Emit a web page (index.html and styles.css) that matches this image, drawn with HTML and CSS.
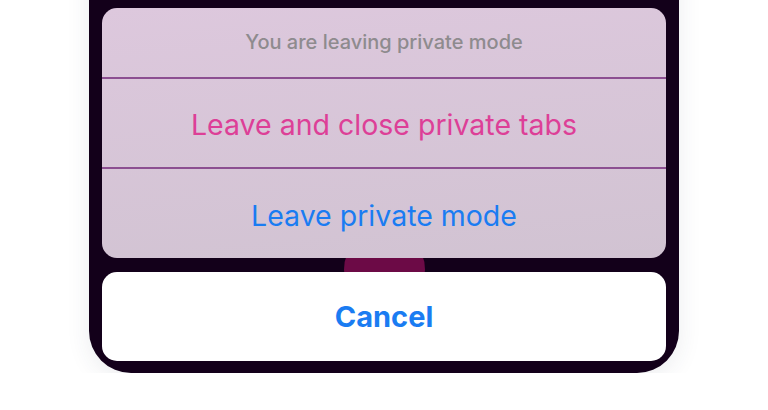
FILE: index.html
```html
<!DOCTYPE html>
<html lang="en">
<head>
    <meta charset="UTF-8">
    <meta name="viewport" content="width=device-width, initial-scale=1.0">
    <title>Leave private mode</title>
    <link rel="stylesheet" href="styles.css">
</head>
<body>
    <div class="phone">
        <div class="tab-button"></div>
        <div class="action-sheet">
            <div class="sheet-title">You are leaving private mode</div>
            <button class="sheet-action destructive">Leave and close private tabs</button>
            <button class="sheet-action">Leave private mode</button>
        </div>
        <button class="cancel-button">Cancel</button>
    </div>
</body>
</html>
```

FILE: styles.css
```css
body {
    margin: 0;
    padding: 0;
    background-color: #fff;
    font-family: 'Inter', 'Roboto', sans-serif;
    overflow: hidden;
}
.phone {
    position: relative;
    width: 590px;
    height: 413px;
    margin: -40px 0 0 89px;
    padding: 48px 13px 12px;
    box-sizing: border-box;
    display: flex;
    flex-direction: column;
    gap: 14px;
    background-color: #13001a;
    border-radius: 0 0 42px 42px;
    box-shadow: 0 6px 24px rgba(40, 50, 80, 0.09);
}
/* magenta button peeking out behind the sheet */
.tab-button {
    position: absolute;
    left: 255px;
    top: 269px;
    width: 81px;
    height: 81px;
    border-radius: 50%;
    background-color: #6c0a46;
}
.action-sheet {
    position: relative;
    height: 250px;
    display: flex;
    flex-direction: column;
    border-radius: 15px;
    overflow: hidden;
    background: linear-gradient(175deg, #ddc8dd, #d1c3d2);
}
.sheet-title {
    height: 71px;
    flex-shrink: 0;
    display: flex;
    align-items: center;
    justify-content: center;
    padding-bottom: 2px;
    font-size: 20px;
    font-weight: 500;
    color: #8e8b8e;
    border-bottom: 2px solid #8c4f91;
    box-sizing: border-box;
}
.sheet-action {
    height: 90px;
    flex-shrink: 0;
    border: none;
    background: none;
    font-family: inherit;
    font-size: 28.5px;
    color: #1a7cf2;
    padding: 2px 0 0;
    box-sizing: border-box;
}
.sheet-action.destructive {
    color: #dd3f97;
    border-bottom: 2px solid #8c4f91;
}
.cancel-button {
    position: relative;
    height: 89px;
    border: none;
    border-radius: 15px;
    background-color: #fff;
    font-family: inherit;
    font-size: 29px;
    font-weight: 700;
    color: #1a7cf2;
    padding: 0;
}
```
